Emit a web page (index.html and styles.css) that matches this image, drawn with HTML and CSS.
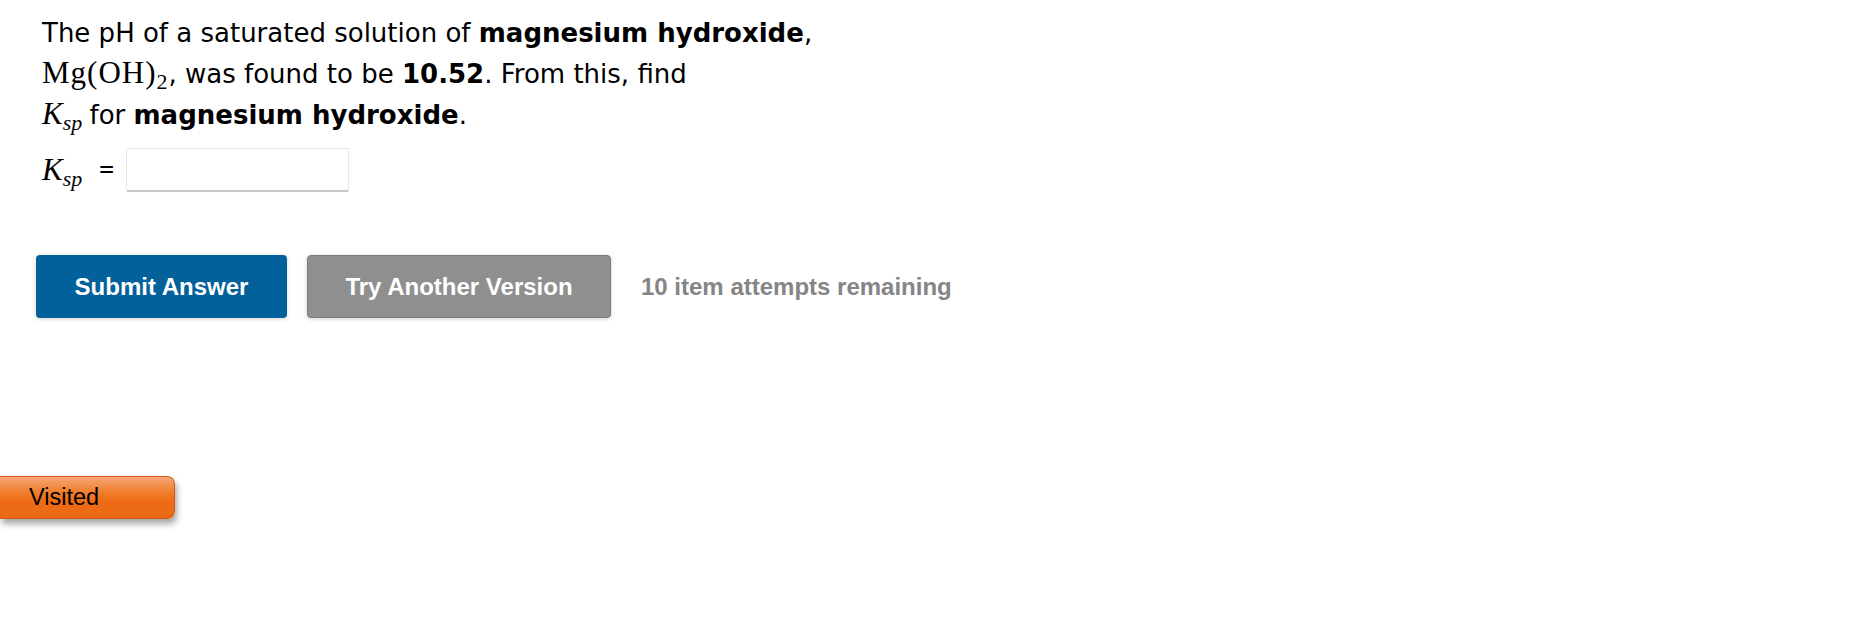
FILE: index.html
```html
<!DOCTYPE html>
<html>
<head>
<meta charset="utf-8">
<link rel="stylesheet" href="styles.css">
</head>
<body>
<div class="page">
  <div class="question">
    <p class="prose">The pH of a saturated solution of <b>magnesium hydroxide</b>,<br>
    <span class="math formula">Mg(OH)<sub>2</sub></span>, was found to be <b>10.52</b>. From this, find<br>
    <span class="math ksp-inline"><i>K</i><sub><i>sp</i></sub></span> for <b>magnesium hydroxide</b>.</p>
    <div class="answer-row">
      <span class="math label"><i>K</i><sub><i>sp</i></sub></span>
      <span class="eq">=</span>
      <input class="answer" type="text">
    </div>
  </div>
  <div class="actions">
    <button class="btn btn-submit">Submit Answer</button>
    <button class="btn btn-another">Try Another Version</button>
    <span class="attempts">10 item attempts remaining</span>
  </div>
  <div class="visited">Visited</div>
</div>
</body>
</html>
```
FILE: styles.css
```css
html, body {
  margin: 0;
  padding: 0;
  background: #ffffff;
}
.page {
  padding: 13px 0 0 42px;
  position: relative;
  height: 617px;
}
.prose {
  margin: 0;
  font-family: "DejaVu Sans", Verdana, sans-serif;
  font-size: 26px;
  line-height: 40px;
  color: #000;
}
.prose b {
  font-weight: bold;
}
.math {
  font-family: "Liberation Serif", "DejaVu Serif", serif;
  font-size: 31px;
}
.math sub {
  font-size: 22px;
  vertical-align: -6px;
  line-height: 0;
}
.formula {
  letter-spacing: 1px;
}
.ksp-inline {
  margin-right: -1px;
}
.answer-row {
  display: flex;
  align-items: center;
  margin-top: 13px;
  height: 44px;
}
.answer-row .label {
  width: 57px;
}
.eq {
  font-family: "Liberation Serif", serif;
  font-weight: bold;
  font-size: 27px;
  width: 27px;
}
.answer {
  box-sizing: border-box;
  width: 223px;
  height: 44px;
  border: 1px solid #e6e6e6;
  border-bottom: 2px solid #c8c8c8;
  border-radius: 2px;
  margin: 0;
  padding: 0 6px;
  font-size: 20px;
}
.actions {
  display: flex;
  align-items: center;
  margin-top: 63px;
  margin-left: -6px;
}
.btn {
  height: 63px;
  border-radius: 4px;
  font-family: "Liberation Sans", Arial, sans-serif;
  font-weight: bold;
  font-size: 24px;
  color: #fff;
  padding: 0;
  box-shadow: 0 1px 4px rgba(0, 0, 0, 0.18);
}
.btn-submit {
  width: 251px;
  background: #02619a;
  border: none;
}
.btn-another {
  width: 304px;
  margin-left: 20px;
  background: #8f8f8f;
  border: 1px solid #7b7b7b;
}
.attempts {
  margin-left: 30px;
  font-family: "Liberation Sans", Arial, sans-serif;
  font-weight: bold;
  font-size: 24px;
  color: #858585;
}
.visited {
  position: absolute;
  left: 0;
  top: 476px;
  width: 175px;
  height: 43px;
  box-sizing: border-box;
  border: 1px solid #d9561c;
  border-left: none;
  border-radius: 0 8px 8px 0;
  background: linear-gradient(to bottom, #f6a77a 0%, #f0802f 35%, #ee6b16 60%, #ed6a14 100%);
  box-shadow: 2px 5px 6px rgba(0, 0, 0, 0.35);
  font-family: "Liberation Sans", Arial, sans-serif;
  font-size: 23.5px;
  color: #000;
  display: flex;
  align-items: center;
  padding-left: 29px;
}
```
